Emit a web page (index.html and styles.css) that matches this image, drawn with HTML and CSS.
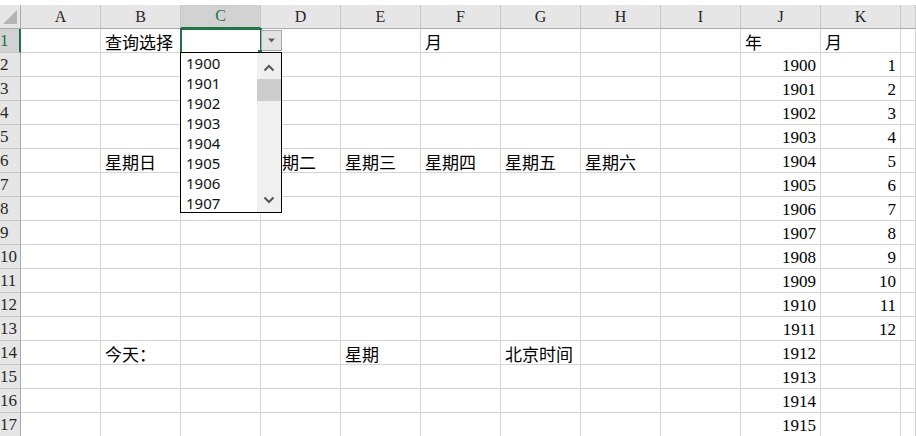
FILE: index.html
```html
<!DOCTYPE html>
<html lang="zh-CN">
<head>
    <meta charset="UTF-8">
    <title>万年历</title>
    <link rel="stylesheet" href="styles.css">
</head>
<body>
    <div class="sheet">
        <div class="grid" id="grid"></div>

        <!-- C1 数据验证下拉 -->
        <div class="dd-button">
            <svg width="9" height="5" viewBox="0 0 9 5"><path d="M1 0.5 L8 0.5 L4.5 4.5 Z" fill="#5f5f5f"/></svg>
        </div>
        <div class="fill-handle"></div>
        <div class="dd-list">
            <ul class="dd-items">
                <li>1900</li>
                <li>1901</li>
                <li>1902</li>
                <li>1903</li>
                <li>1904</li>
                <li>1905</li>
                <li>1906</li>
                <li>1907</li>
            </ul>
            <div class="dd-scroll">
                <svg class="arrow-up" width="12" height="8" viewBox="0 0 12 8"><path d="M1.5 6.5 L6 2 L10.5 6.5" fill="none" stroke="#555" stroke-width="2"/></svg>
                <div class="thumb"></div>
                <svg class="arrow-down" width="12" height="8" viewBox="0 0 12 8"><path d="M1.5 1.5 L6 6 L10.5 1.5" fill="none" stroke="#555" stroke-width="2"/></svg>
            </div>
        </div>
    </div>

    <script>
        const cols = ['A', 'B', 'C', 'D', 'E', 'F', 'G', 'H', 'I', 'J', 'K', 'L'];
        // C6 (星期一) sits under the open list, so it is left out
        const texts = {
            B1: '查询选择', F1: '月', J1: '年', K1: '月',
            B6: '星期日', D6: '星期二', E6: '星期三',
            F6: '星期四', G6: '星期五', H6: '星期六',
            B14: '今天：', E14: '星期', G14: '北京时间'
        };
        const nums = {};
        for (let r = 2; r <= 17; r++) nums['J' + r] = 1898 + r;
        for (let r = 2; r <= 13; r++) nums['K' + r] = r - 1;

        const grid = document.getElementById('grid');

        function addCell(cls, text) {
            const div = document.createElement('div');
            div.className = cls;
            if (text !== undefined) div.textContent = text;
            grid.appendChild(div);
        }

        // header row (L is off screen, no letter shown)
        addCell('head corner');
        cols.forEach(c => addCell('head col-head' + (c === 'C' ? ' sel' : ''), c === 'L' ? undefined : c));

        for (let r = 1; r <= 17; r++) {
            addCell('head row-head' + (r === 1 ? ' sel' : ''), r);
            cols.forEach(c => {
                const key = c + r;
                if (nums[key] !== undefined) {
                    addCell('cell num', nums[key]);
                } else {
                    addCell('cell' + (key === 'C1' ? ' active' : ''), texts[key]);
                }
            });
        }
    </script>
</body>
</html>
```

FILE: styles.css
```css
body {
    margin: 0;
    background: #fff;
    overflow: hidden;
    width: 916px;
    height: 436px;
}
.sheet {
    position: relative;
    padding-top: 5px;
    width: 916px;
    overflow: hidden;
}
.grid {
    display: grid;
    grid-template-columns: 21px repeat(11, 80px) 15px;
    grid-auto-rows: 24px;
}
.head,
.cell {
    box-sizing: border-box;
    display: flex;
    align-items: center;
    white-space: nowrap;
    font-family: 'Liberation Serif', 'Noto Sans CJK SC', serif;
    font-size: 17px;
    color: #000;
}
.head {
    background: #e6e6e6;
    color: #262626;
}
.corner {
    position: relative;
    border-right: 1px solid #ababab;
    border-bottom: 1px solid #ababab;
}
.corner::after {
    content: '';
    position: absolute;
    right: 3px;
    bottom: 4px;
    border-left: 14px solid transparent;
    border-bottom: 14px solid #b5b5b5;
}
.col-head {
    justify-content: center;
    font-size: 16px;
    border-right: 1px solid #c8c8c8;
    border-bottom: 1px solid #ababab;
}
.col-head.sel {
    background: #d2d2d2;
    color: #217346;
    border-bottom: 2px solid #217346;
}
.row-head {
    padding-left: 0;
    border-right: 1px solid #ababab;
    border-bottom: 1px solid #c8c8c8;
    overflow: hidden;
}
.row-head.sel {
    background: #d2d2d2;
    color: #217346;
    border-right: 2px solid #217346;
}
.cell {
    padding: 2px 4px 0 4px;
    border-right: 1px solid #d4d4d4;
    border-bottom: 1px solid #d4d4d4;
}
.cell.num {
    justify-content: flex-end;
}
.cell.active {
    position: relative;
    z-index: 1;
    outline: 2px solid #217346;
    outline-offset: -1px;
}

/* drop-down of C1 */
.dd-button {
    position: absolute;
    left: 261px;
    top: 30px;
    width: 19px;
    height: 19px;
    background: #e3e3e3;
    border: 1px solid #a6a6a6;
    display: flex;
    align-items: center;
    justify-content: center;
    z-index: 2;
}
.fill-handle {
    position: absolute;
    left: 258px;
    top: 50px;
    width: 4px;
    height: 3px;
    background: #217346;
    z-index: 2;
}
.dd-list {
    position: absolute;
    left: 180px;
    top: 52px;
    width: 100px;
    height: 159px;
    border: 1px solid #000;
    background: #fff;
    display: flex;
    z-index: 3;
}
.dd-items {
    list-style: none;
    margin: 0;
    padding: 0;
    flex: 1;
}
.dd-items li {
    height: 20px;
    line-height: 20px;
    padding-left: 5px;
    font-family: 'Noto Sans', sans-serif;
    font-size: 15px;
    color: #111;
}
.dd-scroll {
    position: relative;
    width: 24px;
    background: #f0f0f0;
}
.arrow-up {
    position: absolute;
    left: 6px;
    top: 11px;
}
.thumb {
    position: absolute;
    left: 0;
    right: 0;
    top: 26px;
    height: 22px;
    background: #cdcdcd;
}
.arrow-down {
    position: absolute;
    left: 6px;
    top: 143px;
}
```
